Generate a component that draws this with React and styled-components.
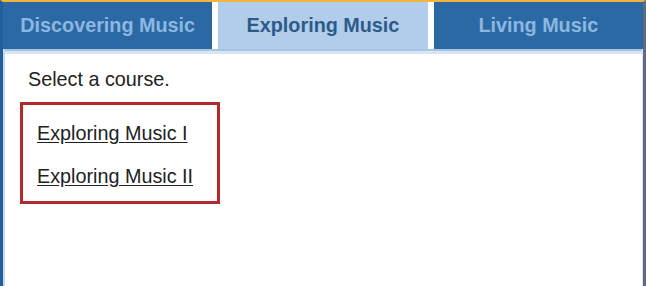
import React from 'react';
import styled, { createGlobalStyle } from 'styled-components';

// course picker: three music tabs over a white panel

const GlobalStyle = createGlobalStyle`
  html, body {
    margin: 0;
    padding: 0;
    background: #fff;
  }
  body {
    font-family: "Liberation Sans", Arial, sans-serif;
  }
`;

const Frame = styled.div`
    width: 646px;
    height: 286px;
    box-sizing: border-box;
    border-top: 2px solid #f2b441;
    border-left: 3px solid #245e9b;
    border-right: 3px solid #5d6b83;
    display: flex;
    flex-direction: column;
    overflow: hidden;
`;

const TabBar = styled.div`
    display: flex;
    gap: 6px;
    height: 47px;
    background: #fff;
`;

const Tab = styled.div`
    flex: 1;
    display: flex;
    align-items: center;
    justify-content: center;
    background: ${p => (p.active ? '#b1cde9' : '#2b69a5')};
    color: ${p => (p.active ? '#2d5a8a' : '#8cb7e0')};
    font-size: 19.8px;
    font-weight: bold;
    cursor: pointer;
`;

const Panel = styled.div`
    flex: 1;
    box-sizing: border-box;
    border-left: 2px solid #c5dbf0;
    border-right: 1px solid #d6e4f3;
    background: linear-gradient(#a8c5e6 0 2px, #d8e5f4 2px 5px, #fff 5px);
    padding: 19px 15px 0;
`;

const Prompt = styled.div`
    padding-left: 8px;
    font-size: 19.8px;
    line-height: 23px;
    color: #222;
`;

const CourseBox = styled.div`
    margin-top: 11px;
    width: 200px;
    box-sizing: border-box;
    border: 3px solid #b3282d;
    padding: 17px 12px 13px 14px;
    display: flex;
    flex-direction: column;
    gap: 20px;
`;

const CourseLink = styled.a`
    font-size: 19.8px;
    line-height: 23px;
    color: #222;
    text-decoration: underline;
    text-underline-offset: 2px;
    cursor: pointer;
`;

const tabs = ['Discovering Music', 'Exploring Music', 'Living Music'];
const courses = ['Exploring Music I', 'Exploring Music II'];

export default function App() {
  return (
    <>
      <GlobalStyle />
      <Frame>
        <TabBar>
          {tabs.map(t => (
            <Tab key={t} active={t === 'Exploring Music'}>{t}</Tab>
          ))}
        </TabBar>
        <Panel>
          <Prompt>Select a course.</Prompt>
          <CourseBox>
            {courses.map(c => (
              <CourseLink key={c}>{c}</CourseLink>
            ))}
          </CourseBox>
        </Panel>
      </Frame>
    </>
  );
}
